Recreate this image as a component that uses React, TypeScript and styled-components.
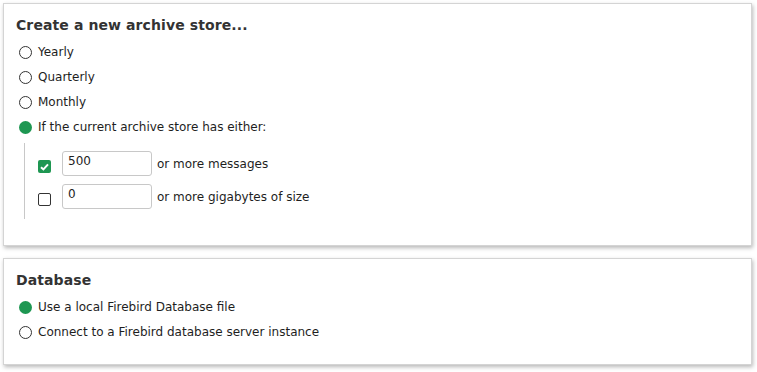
import React, { useState } from 'react';
import styled, { createGlobalStyle } from 'styled-components';

const GlobalStyle = createGlobalStyle`
  html, body {
    margin: 0;
    padding: 0;
    background: #ffffff;
  }
  body {
    font-family: "DejaVu Sans", Verdana, sans-serif;
    font-size: 12px;
    color: #1e1e1e;
  }
`;

const Page = styled.div`
  display: flex;
  flex-direction: column;
  gap: 12px;
  padding: 3px 5px 8px 3px;
  width: 757px;
  box-sizing: border-box;
`;

const Panel = styled.section<{ $height: number }>`
  box-sizing: border-box;
  height: ${p => p.$height}px;
  background: #fff;
  border: 1px solid #d4d4d4;
  box-shadow: 1px 2px 4px rgba(0, 0, 0, 0.28);
  padding: 11px 12px 0 12px;
`;

const Title = styled.h3`
  margin: 0 0 7px 0;
  font-size: 14px;
  font-weight: bold;
  color: #333;
  line-height: 20px;
  letter-spacing: 0.1px;
`;

const OptionList = styled.div`
  display: flex;
  flex-direction: column;
  gap: 6px;
`;

const RadioRow = styled.label`
  display: flex;
  align-items: center;
  gap: 6px;
  height: 19px;
  cursor: pointer;
`;

const RadioDot = styled.span<{ $checked: boolean }>`
  width: 13px;
  height: 13px;
  box-sizing: border-box;
  border-radius: 50%;
  margin-left: 3px;
  margin-top: 2px;
  border: ${p => (p.$checked ? 'none' : '1px solid #333')};
  background: ${p => (p.$checked ? '#1e9752' : '#fff')};
  flex: none;
`;

const Threshold = styled.div`
  margin: 7px 0 0 8px;
  padding: 8px 0 10px 13px;
  border-left: 1px solid #c8c8c8;
  display: flex;
  flex-direction: column;
  gap: 8px;
  width: max-content;
`;

const ThresholdRow = styled.div`
  display: flex;
  align-items: center;
`;

const Check = styled.span<{ $checked: boolean }>`
  width: 13px;
  height: 13px;
  box-sizing: border-box;
  border-radius: 2px;
  margin-top: 6px;
  margin-right: 11px;
  display: flex;
  align-items: center;
  justify-content: center;
  border: ${p => (p.$checked ? 'none' : '1px solid #333')};
  background: ${p => (p.$checked ? '#1e9752' : '#fff')};
  flex: none;
`;

const NumberInput = styled.input`
  box-sizing: border-box;
  width: 90px;
  height: 25px;
  border: 1px solid #c8c8c8;
  border-radius: 3px;
  padding: 0 5px;
  font-family: inherit;
  font-size: 12px;
  color: #1e1e1e;
  margin-right: 5px;
  padding-bottom: 6px;
  outline: none;
`;

const Hint = styled.span`
  font-size: 12px;
`;

function Radio({ checked, label, onSelect }: { checked: boolean; label: string; onSelect: () => void }) {
  return (
    <RadioRow onClick={onSelect}>
      <RadioDot $checked={checked} />
      <span>{label}</span>
    </RadioRow>
  );
}

function CheckBox({ checked }: { checked: boolean }) {
  return (
    <Check $checked={checked}>
      {checked && (
        <svg width="9" height="8" viewBox="0 0 9 8">
          <path d="M1 4.2 L3.4 6.4 L8 1.4" stroke="#fff" strokeWidth="2" fill="none" />
        </svg>
      )}
    </Check>
  );
}

export default function App() {
  const [period, setPeriod] = useState('either');
  const [db, setDb] = useState('local');

  return (
    <>
      <GlobalStyle />
      <Page>
        <Panel $height={243}>
          <Title>Create a new archive store...</Title>
          <OptionList>
            <Radio checked={period === 'yearly'} label="Yearly" onSelect={() => setPeriod('yearly')} />
            <Radio checked={period === 'quarterly'} label="Quarterly" onSelect={() => setPeriod('quarterly')} />
            <Radio checked={period === 'monthly'} label="Monthly" onSelect={() => setPeriod('monthly')} />
            <Radio
              checked={period === 'either'}
              label="If the current archive store has either:"
              onSelect={() => setPeriod('either')}
            />
          </OptionList>
          <Threshold>
            <ThresholdRow>
              <CheckBox checked />
              <NumberInput defaultValue="500" />
              <Hint>or more messages</Hint>
            </ThresholdRow>
            <ThresholdRow>
              <CheckBox checked={false} />
              <NumberInput defaultValue="0" />
              <Hint>or more gigabytes of size</Hint>
            </ThresholdRow>
          </Threshold>
        </Panel>
        <Panel $height={107}>
          <Title>Database</Title>
          <OptionList>
            <Radio checked={db === 'local'} label="Use a local Firebird Database file" onSelect={() => setDb('local')} />
            <Radio
              checked={db === 'server'}
              label="Connect to a Firebird database server instance"
              onSelect={() => setDb('server')}
            />
          </OptionList>
        </Panel>
      </Page>
    </>
  );
}
